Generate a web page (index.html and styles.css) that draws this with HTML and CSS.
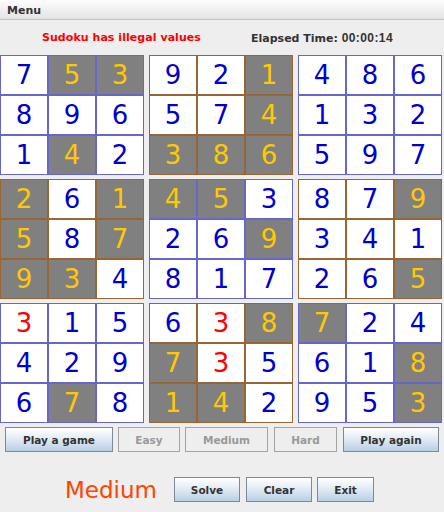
FILE: index.html
```html
<!DOCTYPE html>
<html>
<head>
<meta charset="utf-8">
<link rel="stylesheet" href="styles.css">
</head>
<body>
<div class="menubar"><span class="menu">Menu</span></div>
<div class="status">
  <span class="illegal">Sudoku has illegal values</span>
  <span class="elapsed">Elapsed Time: <span class="time">00:00:14</span></span>
</div>
<div class="board">
  <div class="block blue">
    <div class="cell">7</div><div class="cell fixed">5</div><div class="cell fixed">3</div>
    <div class="cell">8</div><div class="cell">9</div><div class="cell">6</div>
    <div class="cell">1</div><div class="cell fixed">4</div><div class="cell">2</div>
  </div>
  <div class="block brown">
    <div class="cell">9</div><div class="cell">2</div><div class="cell fixed">1</div>
    <div class="cell">5</div><div class="cell">7</div><div class="cell fixed">4</div>
    <div class="cell fixed">3</div><div class="cell fixed">8</div><div class="cell fixed">6</div>
  </div>
  <div class="block blue">
    <div class="cell">4</div><div class="cell">8</div><div class="cell">6</div>
    <div class="cell">1</div><div class="cell">3</div><div class="cell">2</div>
    <div class="cell">5</div><div class="cell">9</div><div class="cell">7</div>
  </div>
  <div class="block brown">
    <div class="cell fixed">2</div><div class="cell">6</div><div class="cell fixed">1</div>
    <div class="cell fixed">5</div><div class="cell">8</div><div class="cell fixed">7</div>
    <div class="cell fixed">9</div><div class="cell fixed">3</div><div class="cell">4</div>
  </div>
  <div class="block blue">
    <div class="cell fixed">4</div><div class="cell fixed">5</div><div class="cell">3</div>
    <div class="cell">2</div><div class="cell">6</div><div class="cell fixed">9</div>
    <div class="cell">8</div><div class="cell">1</div><div class="cell">7</div>
  </div>
  <div class="block brown">
    <div class="cell">8</div><div class="cell">7</div><div class="cell fixed">9</div>
    <div class="cell">3</div><div class="cell">4</div><div class="cell">1</div>
    <div class="cell">2</div><div class="cell">6</div><div class="cell fixed">5</div>
  </div>
  <div class="block blue">
    <div class="cell bad">3</div><div class="cell">1</div><div class="cell">5</div>
    <div class="cell">4</div><div class="cell">2</div><div class="cell">9</div>
    <div class="cell">6</div><div class="cell fixed">7</div><div class="cell">8</div>
  </div>
  <div class="block brown">
    <div class="cell">6</div><div class="cell bad">3</div><div class="cell fixed">8</div>
    <div class="cell fixed">7</div><div class="cell bad">3</div><div class="cell">5</div>
    <div class="cell fixed">1</div><div class="cell fixed">4</div><div class="cell">2</div>
  </div>
  <div class="block blue">
    <div class="cell fixed">7</div><div class="cell">2</div><div class="cell">4</div>
    <div class="cell">6</div><div class="cell">1</div><div class="cell fixed">8</div>
    <div class="cell">9</div><div class="cell">5</div><div class="cell fixed">3</div>
  </div>
</div>
<div class="row1">
  <button class="btn b-play">Play a game</button>
  <button class="btn off b-easy" disabled>Easy</button>
  <button class="btn off b-medium" disabled>Medium</button>
  <button class="btn off b-hard" disabled>Hard</button>
  <button class="btn b-again">Play again</button>
</div>
<div class="row2">
  <span class="level">Medium</span>
  <button class="btn b-solve">Solve</button>
  <button class="btn b-clear">Clear</button>
  <button class="btn b-exit">Exit</button>
</div>
</body>
</html>
```
FILE: styles.css
```css
html, body {
  margin: 0;
  padding: 0;
}
body {
  width: 444px;
  height: 512px;
  background: #eeeeee;
  font-family: "DejaVu Sans", sans-serif;
  overflow: hidden;
}
.menubar {
  height: 20px;
  box-sizing: border-box;
  background: linear-gradient(#fdfdfd, #e3e3e3);
  border-bottom: 1px solid #c4c4c4;
  display: flex;
  align-items: center;
}
.menu {
  margin-left: 7px;
  font-weight: bold;
  font-size: 11px;
  color: #333333;
  margin-top: 1px;
}
.status {
  height: 35px;
  display: flex;
  align-items: center;
  font-weight: bold;
  font-size: 11px;
}
.illegal {
  color: #ff0000;
  margin-left: 42px;
  width: 209px;
  letter-spacing: 0.05px;
}
.elapsed {
  color: #333333;
}
.time {
  font-family: "Liberation Sans", sans-serif;
  font-size: 12px;
  letter-spacing: 0.4px;
}
.board {
  display: grid;
  grid-template-columns: 144px 144px 144px;
  column-gap: 5px;
  row-gap: 4px;
}
.block {
  display: grid;
  grid-template-columns: 48px 48px 48px;
  grid-template-rows: 40px 40px 40px;
}
.cell {
  box-sizing: border-box;
  border: 1px solid;
  background: #ffffff;
  color: #0000cc;
  font-size: 26px;
  display: flex;
  align-items: center;
  justify-content: center;
}
.blue .cell { border-color: #6666cc; }
.brown .cell { border-color: #996633; }
.cell.fixed {
  background: #808080;
  color: #ffc800;
}
.cell.bad {
  color: #ff0000;
}
.row1 {
  display: flex;
  margin-top: 4px;
  height: 25px;
}
.btn {
  box-sizing: border-box;
  height: 25px;
  padding: 0;
  font-family: "DejaVu Sans", sans-serif;
  font-weight: bold;
  font-size: 10.5px;
  color: #333333;
  border: 1px solid #7a8a99;
  background: linear-gradient(#ffffff 0%, #f3f7fb 20%, #dce7f2 55%, #b8cfe5 100%);
  border-radius: 0;
}
.btn.off {
  background: #eeeeee;
  border-color: #a3a3a3;
  color: #999999;
}
.b-play { margin-left: 5px; width: 108px; }
.b-easy { margin-left: 5px; width: 62px; }
.b-medium { margin-left: 5px; width: 83px; }
.b-hard { margin-left: 6px; width: 63px; }
.b-again { margin-left: 6px; width: 96px; }
.row2 {
  display: flex;
  align-items: center;
  margin-top: 25px;
  height: 25px;
}
.level {
  margin-left: 65px;
  width: 109px;
  color: #ff4400;
  font-size: 23px;
}
.b-solve { width: 66px; }
.b-clear { margin-left: 6px; width: 66px; }
.b-exit { margin-left: 5px; width: 57px; }
```
